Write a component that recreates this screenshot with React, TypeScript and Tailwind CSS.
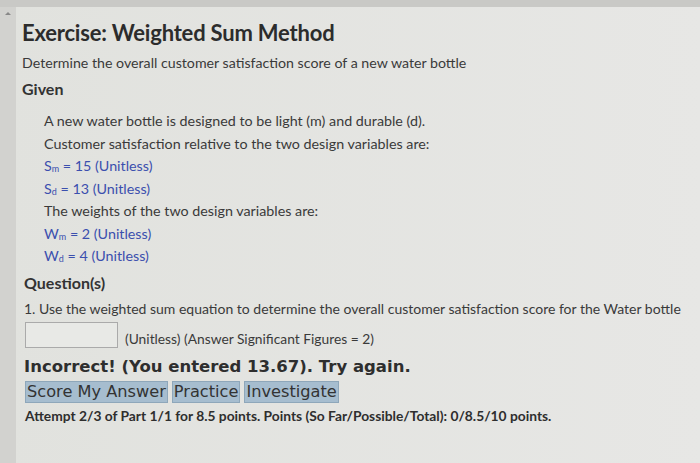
import React from "react";

const Sub = ({ children }: { children: React.ReactNode }) => (
  <sub className="text-[9px] relative top-[1px] align-baseline">{children}</sub>
);

export default function App() {
  const calibri = { fontFamily: "Lato, 'Open Sans', sans-serif" } as const;
  const verdana = { fontFamily: "'DejaVu Sans', Verdana, sans-serif" } as const;
  return (
    <div className="w-[700px] h-[463px] overflow-hidden bg-gradient-to-r from-[#e1e2de] to-[#e7e7e5] flex flex-col text-[#333]">
      <div className="h-[7px] bg-[#c9c9c6] shrink-0" />
      <div className="flex flex-1">
        <div className="w-[16px] bg-[#d2d2cf] flex flex-col items-center pt-[5px] shrink-0">
          <div className="w-0 h-0 border-l-[3px] border-r-[3px] border-b-[3px] border-l-transparent border-r-transparent border-b-[#888]" />
        </div>
        <div className="flex-1 pl-[6px] pt-[12px]" style={calibri}>
          <h1 className="text-[22px] font-bold leading-[28px] text-[#2c2c2c] tracking-[-0.2px]">
            Exercise: Weighted Sum Method
          </h1>
          <p className="text-[14.2px] leading-[20px] mt-[6px] text-[#3a3a3a]">
            Determine the overall customer satisfaction score of a new water bottle
          </p>
          <p className="text-[16px] font-bold leading-[22px] mt-[5px] text-[#333]">Given</p>
          <div className="pl-[22px] mt-[10px] text-[14.3px] leading-[22.5px] text-[#3a3a3a]">
            <p>A new water bottle is designed to be light (m) and durable (d).</p>
            <p>Customer satisfaction relative to the two design variables are:</p>
            <p className="text-[#3b4fae]">S<Sub>m</Sub> = 15 (Unitless)</p>
            <p className="text-[#3b4fae]">S<Sub>d</Sub> = 13 (Unitless)</p>
            <p>The weights of the two design variables are:</p>
            <p className="text-[#3b4fae]">W<Sub>m</Sub> = 2 (Unitless)</p>
            <p className="text-[#3b4fae]">W<Sub>d</Sub> = 4 (Unitless)</p>
          </div>
          <p className="text-[16px] font-bold leading-[22px] mt-[4px] pl-[2px] text-[#333]">Question(s)</p>
          <p className="text-[14px] leading-[20px] mt-[5px] pl-[2px] text-[#3a3a3a]">
            1. Use the weighted sum equation to determine the overall customer satisfaction score for the Water bottle
          </p>
          <div className="flex items-end gap-[7px] mt-[3px] pl-[3px]">
            <div className="w-[93px] h-[26px] border border-[#aaa] bg-[#e8e9e6]" />
            <span className="text-[13.8px] leading-[18px] text-[#3a3a3a]">
              (Unitless) (Answer Significant Figures = 2)
            </span>
          </div>
          <p className="text-[16.5px] font-bold leading-[20px] mt-[9px] pl-[2px] text-[#2e2e2e]" style={verdana}>
            Incorrect! (You entered 13.67). Try again.
          </p>
          <div className="flex gap-[4px] mt-[4px] pl-[3px] text-[16.2px] leading-[20px] text-[#333]" style={verdana}>
            <span className="bg-[#a6bdcf] border border-[#8ea7ba] px-[1px] h-[22px] flex items-center">Score My Answer</span>
            <span className="bg-[#a6bdcf] border border-[#8ea7ba] px-[1px] h-[22px] flex items-center">Practice</span>
            <span className="bg-[#a6bdcf] border border-[#8ea7ba] px-[1px] h-[22px] flex items-center">Investigate</span>
          </div>
          <p className="text-[13.8px] font-bold leading-[18px] mt-[4px] pl-[3px] text-[#2e2e2e]">
            Attempt 2/3 of Part 1/1 for 8.5 points. Points (So Far/Possible/Total): 0/8.5/10 points.
          </p>
        </div>
      </div>
    </div>
  );
}
